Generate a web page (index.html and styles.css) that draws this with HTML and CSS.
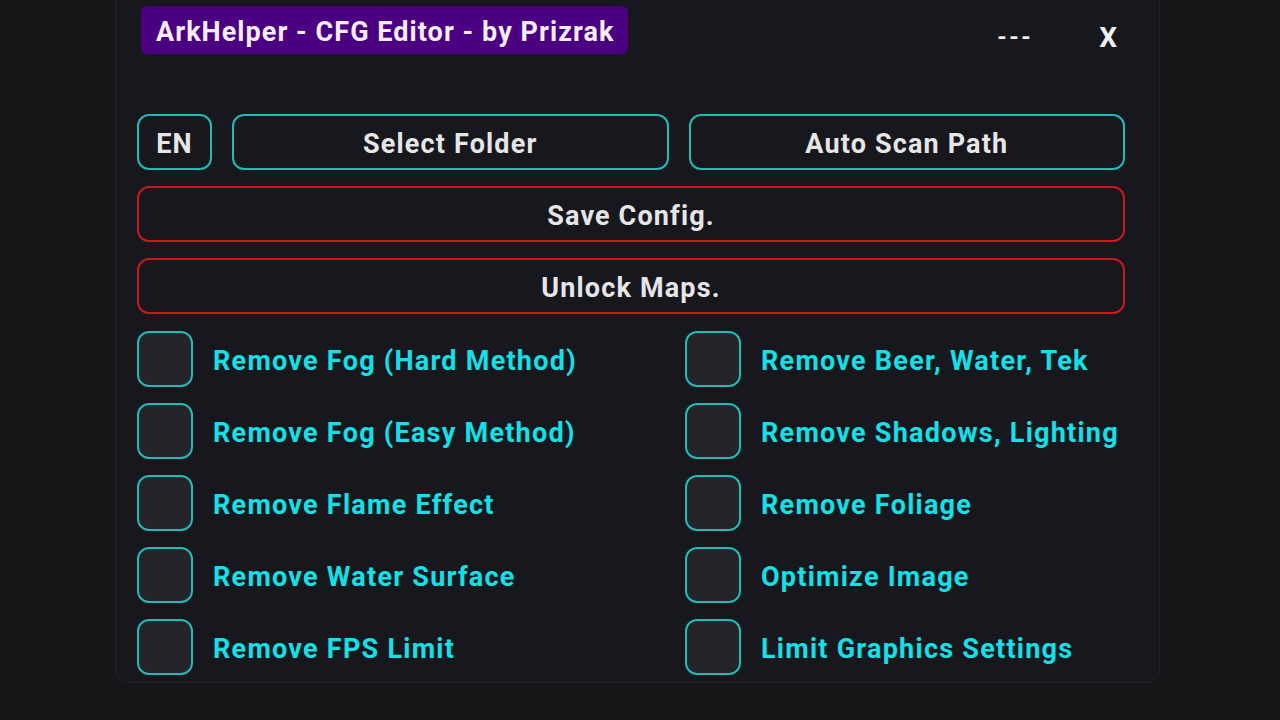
FILE: index.html
```html
<!DOCTYPE html>
<html lang="en">
<head>
    <meta charset="UTF-8">
    <meta name="viewport" content="width=device-width, initial-scale=1.0">
    <title>ArkHelper - CFG Editor</title>
    <link rel="stylesheet" href="styles.css">
</head>
<body>
    <div class="window">
        <div class="title-bar">
            <div class="title">ArkHelper - CFG Editor - by Prizrak</div>
            <div class="window-controls">
                <span class="control minimize">---</span>
                <span class="control close">X</span>
            </div>
        </div>

        <div class="button-row">
            <button class="btn btn-teal btn-lang">EN</button>
            <button class="btn btn-teal btn-wide">Select Folder</button>
            <button class="btn btn-teal btn-wide">Auto Scan Path</button>
        </div>
        <button class="btn btn-red">Save Config.</button>
        <button class="btn btn-red">Unlock Maps.</button>

        <div class="options">
            <label class="option"><span class="box"></span><span class="text">Remove Fog (Hard Method)</span></label>
            <label class="option"><span class="box"></span><span class="text">Remove Beer, Water, Tek</span></label>
            <label class="option"><span class="box"></span><span class="text">Remove Fog (Easy Method)</span></label>
            <label class="option"><span class="box"></span><span class="text">Remove Shadows, Lighting</span></label>
            <label class="option"><span class="box"></span><span class="text">Remove Flame Effect</span></label>
            <label class="option"><span class="box"></span><span class="text">Remove Foliage</span></label>
            <label class="option"><span class="box"></span><span class="text">Remove Water Surface</span></label>
            <label class="option"><span class="box"></span><span class="text">Optimize Image</span></label>
            <label class="option"><span class="box"></span><span class="text">Remove FPS Limit</span></label>
            <label class="option"><span class="box"></span><span class="text">Limit Graphics Settings</span></label>
        </div>
    </div>
</body>
</html>
```

FILE: styles.css
```css
* {
    margin: 0;
    padding: 0;
    box-sizing: border-box;
}

body {
    font-family: Roboto, 'Liberation Sans', sans-serif;
    background: #161619;
    height: 100vh;
    overflow: hidden;
}

.window {
    width: 1045px;
    height: 697px;
    margin: -14px 0 0 115px;
    padding: 19px 34px 0 21px;
    background: #17171e;
    border: 1px solid #232329;
    border-radius: 14px;
    display: flex;
    flex-direction: column;
}

.title-bar {
    display: flex;
    align-items: center;
    justify-content: space-between;
    height: 48px;
    margin-bottom: 60px;
}

.title {
    margin-left: 4px;
    height: 48px;
    padding: 3px 14px 0 15px;
    display: flex;
    align-items: center;
    background: #4b0082;
    border-radius: 6px;
    color: #f4eef8;
    font-size: 27px;
    font-weight: 700;
    letter-spacing: 1.05px;
}

.window-controls {
    display: flex;
    align-items: center;
    gap: 66px;
    margin-right: 8px;
    padding-top: 14px;
    color: #f0f0f0;
    font-weight: 700;
}

.minimize {
    font-size: 24px;
    letter-spacing: 2.5px;
}

.close {
    font-size: 28px;
}

.button-row {
    display: flex;
    gap: 20px;
    margin-bottom: 16px;
}

.btn {
    height: 56px;
    background: #17171e;
    border: 2px solid;
    border-radius: 12px;
    color: #e6e6e6;
    font-family: inherit;
    font-size: 27px;
    font-weight: 700;
    letter-spacing: 1.15px;
    padding-top: 3px;
    cursor: pointer;
}

.btn-teal {
    border-color: #22b9b6;
}

.btn-lang {
    width: 75px;
}

.btn-wide {
    flex: 1;
}

.btn-red {
    width: 988px;
    border-color: #cc171b;
    margin-bottom: 16px;
}

.options {
    display: grid;
    grid-template-columns: 548px 1fr;
    row-gap: 16px;
    margin-top: 1px;
}

.option {
    display: flex;
    align-items: center;
    gap: 20px;
    color: #14e0e8;
    font-size: 27px;
    font-weight: 700;
    letter-spacing: 1.25px;
    cursor: pointer;
}

.text {
    padding-top: 3px;
}

.box {
    width: 56px;
    height: 56px;
    flex-shrink: 0;
    background: #24242b;
    border: 2px solid #22b9b6;
    border-radius: 12px;
}
```
